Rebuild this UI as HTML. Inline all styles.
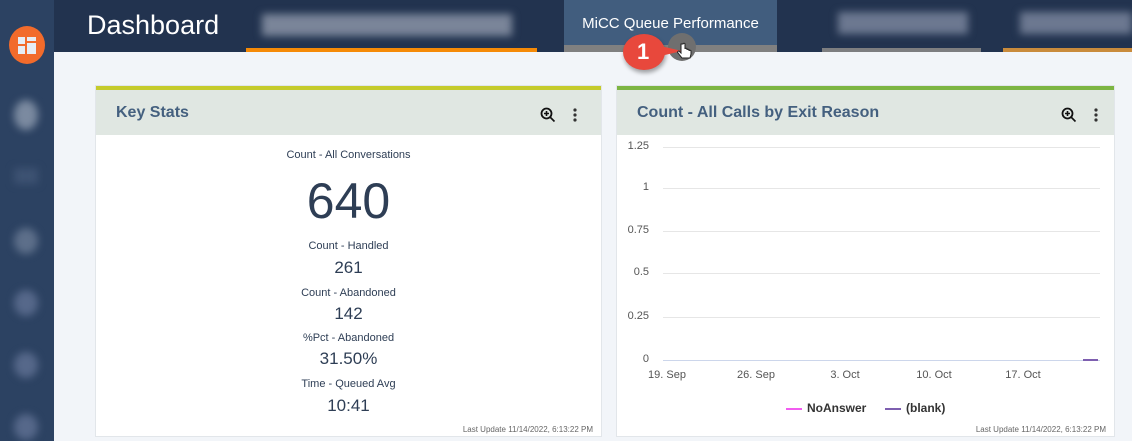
<!DOCTYPE html>
<html><head><style>
*{margin:0;padding:0;box-sizing:border-box}
body{width:1132px;height:441px;overflow:hidden;background:#f2f5f9;font-family:"Liberation Sans",sans-serif;position:relative}
.a{position:absolute}
.card{position:absolute;background:#fff;border:1px solid #e2e6ea}
.hd{position:absolute;left:0;right:0;top:4px;height:45px;background:#e0e7e2;color:#44607f;font-size:16px;font-weight:bold;padding:14px 0 0 20px}
.c{position:absolute;left:0;right:0;text-align:center;color:#2e3e55}
.sm{font-size:11px}.md{font-size:17px}
.yl{position:absolute;right:483px;font-size:11px;color:#555;text-align:right}
.gl{position:absolute;left:663px;width:437px;height:1px;background:#e6e6e6}
.xl{position:absolute;top:369px;font-size:11px;color:#555;transform:translateX(-50%)}
</style></head><body>
<div class="a" style="left:0;top:0;width:54px;height:441px;background:#2c4262"></div>
<div class="a" style="left:9px;top:26px;width:36px;height:38px;border-radius:50%;background:#f26b2b"></div>
<div class="a" style="left:18px;top:37px;width:7px;height:7px;background:#e6edf4"></div>
<div class="a" style="left:18px;top:46px;width:7px;height:8px;background:#e6edf4"></div>
<div class="a" style="left:27px;top:37px;width:9px;height:4px;background:#e6edf4"></div>
<div class="a" style="left:27px;top:43px;width:9px;height:11px;background:#e6edf4"></div>
<div class="a" style="left:14px;top:100px;width:24px;height:30px;border-radius:50%;background:#7b8aa0;filter:blur(4px)"></div>
<div class="a" style="left:14px;top:168px;width:24px;height:16px;background:#3d5272;filter:blur(4px)"></div>
<div class="a" style="left:14px;top:228px;width:24px;height:26px;border-radius:50%;background:#5d6f8a;filter:blur(4px)"></div>
<div class="a" style="left:14px;top:290px;width:24px;height:26px;border-radius:50%;background:#56688a;filter:blur(4px)"></div>
<div class="a" style="left:14px;top:352px;width:24px;height:26px;border-radius:50%;background:#56688a;filter:blur(4px)"></div>
<div class="a" style="left:14px;top:414px;width:24px;height:26px;border-radius:50%;background:#56688a;filter:blur(4px)"></div>
<div class="a" style="left:54px;top:0;width:1078px;height:52px;background:#22334f"></div>
<div class="a" style="left:87px;top:10px;color:#fff;font-size:27px">Dashboard</div>
<div class="a" style="left:262px;top:14px;width:250px;height:22px;background:#7a8599;filter:blur(4px)"></div>
<div class="a" style="left:246px;top:48px;width:291px;height:4px;background:#f58a07"></div>
<div class="a" style="left:564px;top:0;width:213px;height:45px;background:#415d7e;color:#fff;font-size:15px;text-align:center;padding-top:15px">MiCC Queue Performance</div>
<div class="a" style="left:564px;top:45px;width:213px;height:7px;background:#808080"></div>
<div class="a" style="left:838px;top:12px;width:130px;height:22px;background:#6c7890;filter:blur(4px)"></div>
<div class="a" style="left:1020px;top:12px;width:112px;height:22px;background:#6c7890;filter:blur(4px)"></div>
<div class="a" style="left:822px;top:48px;width:159px;height:4px;background:#7d7e80"></div>
<div class="a" style="left:1003px;top:48px;width:129px;height:4px;background:#c98b3c"></div>
<div class="a" style="left:668px;top:33px;width:28px;height:28px;border-radius:50%;background:#6f6f6f"></div>
<div class="a" style="left:623px;top:34px;width:42px;height:36px;border-radius:50%;background:#e8483c;box-shadow:1px 3px 4px rgba(0,0,0,.35)"></div>
<div class="a" style="left:652px;top:44px;width:0;height:0;border-top:7px solid transparent;border-bottom:7px solid transparent;border-left:30px solid #e8483c"></div>
<div class="a" style="left:637px;top:39px;color:#fff;font-size:22px;font-weight:bold">1</div>
<svg class="a" style="left:676px;top:42px" width="18" height="20" viewBox="0 0 18 20"><path d="M5 2v9l-2-2c-1 0-2 1-1 2l4 5h8l1-4V9c0-1-2-1-2 0V8c0-1-2-1-2 0V7c0-1-2-1-2 0V2c0-1-2-1-2 0z" fill="#fff" stroke="#222" stroke-width="1"/></svg>

<div class="card" style="left:95px;top:85px;width:507px;height:352px">
<div class="a" style="left:0;right:0;top:0;height:5px;background:#c5cb2c"></div>
<div class="hd">Key Stats</div>
<svg class="a" style="left:444px;top:21px" width="16" height="16" viewBox="0 0 16 16"><circle cx="6.5" cy="6.5" r="5" fill="none" stroke="#111" stroke-width="1.8"/><path d="M10 10l4.5 4.5M6.5 4v5M4 6.5h5" stroke="#111" stroke-width="1.6"/></svg>
<svg class="a" style="left:477px;top:22px" width="4" height="14"><circle cx="2" cy="2" r="1.6" fill="#333"/><circle cx="2" cy="7" r="1.6" fill="#333"/><circle cx="2" cy="12" r="1.6" fill="#333"/></svg>
<div class="c sm" style="top:63px">Count - All Conversations</div>
<div class="c" style="top:86px;font-size:50px">640</div>
<div class="c sm" style="top:154px">Count - Handled</div>
<div class="c md" style="top:172px">261</div>
<div class="c sm" style="top:201px">Count - Abandoned</div>
<div class="c md" style="top:218px">142</div>
<div class="c sm" style="top:246px">%Pct - Abandoned</div>
<div class="c md" style="top:263px">31.50%</div>
<div class="c sm" style="top:292px">Time - Queued Avg</div>
<div class="c md" style="top:310px">10:41</div>
<div class="a" style="right:8px;top:339px;font-size:8px;color:#666">Last Update 11/14/2022, 6:13:22 PM</div>
</div>

<div class="card" style="left:616px;top:85px;width:499px;height:352px">
<div class="a" style="left:0;right:0;top:0;height:5px;background:#7db543"></div>
<div class="hd">Count - All Calls by Exit Reason</div>
<svg class="a" style="left:444px;top:21px" width="16" height="16" viewBox="0 0 16 16"><circle cx="6.5" cy="6.5" r="5" fill="none" stroke="#111" stroke-width="1.8"/><path d="M10 10l4.5 4.5M6.5 4v5M4 6.5h5" stroke="#111" stroke-width="1.6"/></svg>
<svg class="a" style="left:477px;top:22px" width="4" height="14"><circle cx="2" cy="2" r="1.6" fill="#333"/><circle cx="2" cy="7" r="1.6" fill="#333"/><circle cx="2" cy="12" r="1.6" fill="#333"/></svg>
<div class="a" style="right:8px;top:339px;font-size:8px;color:#666">Last Update 11/14/2022, 6:13:22 PM</div>
</div>
<div class="gl" style="top:147px"></div><div class="gl" style="top:188px"></div><div class="gl" style="top:231px"></div><div class="gl" style="top:273px"></div><div class="gl" style="top:317px"></div>
<div class="gl" style="top:360px;background:#ccd6eb"></div>
<div class="yl" style="top:140px">1.25</div><div class="yl" style="top:181px">1</div><div class="yl" style="top:224px">0.75</div><div class="yl" style="top:266px">0.5</div><div class="yl" style="top:310px">0.25</div><div class="yl" style="top:353px">0</div>
<div class="xl" style="left:667px">19. Sep</div><div class="xl" style="left:756px">26. Sep</div><div class="xl" style="left:845px">3. Oct</div><div class="xl" style="left:934px">10. Oct</div><div class="xl" style="left:1023px">17. Oct</div>
<div class="a" style="left:1083px;top:359px;width:15px;height:2px;background:#7e5fb0"></div>
<div class="a" style="left:786px;top:408px;width:16px;height:2px;background:#f25cf0"></div>
<div class="a" style="left:807px;top:401px;font-size:12px;font-weight:bold;color:#333">NoAnswer</div>
<div class="a" style="left:885px;top:408px;width:16px;height:2px;background:#7e5fb0"></div>
<div class="a" style="left:906px;top:401px;font-size:12px;font-weight:bold;color:#333">(blank)</div>
</body></html>
